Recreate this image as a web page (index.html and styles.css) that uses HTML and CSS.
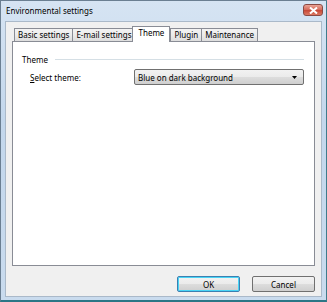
FILE: index.html
```html
<!DOCTYPE html>
<html>
<head>
<meta charset="utf-8">
<link rel="stylesheet" href="styles.css">
</head>
<body>
<div class="window">
  <div class="titlebar">
    <span class="title">Environmental settings</span>
    <span class="close"><svg width="9" height="7" viewBox="0 0 9 7"><path d="M1 0.5 L8 6.5 M8 0.5 L1 6.5" stroke="#fff" stroke-width="2"/></svg></span>
  </div>
  <div class="client">
    <div class="tabs">
      <div class="tab">Basic settings</div>
      <div class="tab">E-mail settings</div>
      <div class="tab selected">Theme</div>
      <div class="tab">Plugin</div>
      <div class="tab">Maintenance</div>
    </div>
    <div class="panel">
      <div class="group">
        <span class="group-label">Theme</span>
        <span class="group-line"></span>
      </div>
      <div class="row">
        <span class="label"><u>S</u>elect theme:</span>
        <div class="combo">
          <span>Blue on dark background</span>
          <svg width="5" height="3" viewBox="0 0 5 3"><path d="M0 0 H5 L2.5 3 Z" fill="#000"/></svg>
        </div>
      </div>
    </div>
    <div class="buttons">
      <div class="btn default">OK</div>
      <div class="btn">Cancel</div>
    </div>
  </div>
</div>
</body>
</html>
```

FILE: styles.css
```css
html, body {
  margin: 0;
  padding: 0;
  background: #fff;
}
body {
  font-family: "Noto Sans", "DejaVu Sans", sans-serif;
  font-size: 8px;
  color: #000;
}
.window {
  width: 327px;
  height: 302px;
  box-sizing: border-box;
  border: 1px solid #6b7f92;
  border-bottom: 2px solid #2b7686;
  border-right-color: #3f7c8c;
  background: linear-gradient(#d6e4f3, #c3d7ec 40%, #c9dbee);
  display: flex;
  flex-direction: column;
}
.titlebar {
  height: 20px;
  display: flex;
  align-items: center;
  justify-content: space-between;
  padding: 0 3px 0 5px;
}
.title {
  margin-top: -1px;
}
.close {
  width: 20px;
  height: 12px;
  margin-top: -2px;
  box-sizing: border-box;
  border: 1px solid #8a4a44;
  border-radius: 3px;
  background: linear-gradient(#eba395, #d66e5e 45%, #c74a39 55%, #dc7862);
  display: flex;
  align-items: center;
  justify-content: center;
}
.client {
  flex: 1;
  margin: 0 4px 3px 4px;
  background: #f0f0f0;
  border: 1px solid #aab9c9;
  display: flex;
  flex-direction: column;
  padding: 4px 6px 0 6px;
}
.tabs {
  display: flex;
  align-items: flex-end;
  height: 16px;
  padding-left: 2px;
  position: relative;
  z-index: 1;
  margin-bottom: -1px;
}
.tab {
  height: 13px;
  box-sizing: border-box;
  border: 1px solid #898c95;
  border-bottom: none;
  margin-right: -1px;
  padding: 0 3px;
  line-height: 12px;
  background: linear-gradient(#f3f3f3, #ebebeb 50%, #dddddd);
  margin-bottom: 1px;
}
.tab.selected {
  height: 16px;
  background: #fff;
  margin: 0 -1px 0 -2px;
  padding: 0 5px;
  line-height: 12px;
  position: relative;
  z-index: 2;
}
.tab.selected + .tab {
  margin-left: 1px;
}
.panel {
  height: 225px;
  box-sizing: border-box;
  border: 1px solid #898c95;
  background: #fff;
  padding: 11px 10px 0 9px;
}
.group {
  display: flex;
  align-items: center;
  height: 12px;
}
.group-label {
  margin-right: 7px;
}
.group-line {
  flex: 1;
  height: 0;
  border-top: 1px solid #d5dfe5;
}
.row {
  display: flex;
  align-items: center;
  margin-top: 4px;
  padding-left: 8px;
}
.label {
  width: 104px;
}
.label u {
  text-decoration-thickness: 1px;
}
.combo {
  flex: 1;
  height: 16px;
  box-sizing: border-box;
  border: 1px solid #707070;
  border-radius: 2px;
  background: linear-gradient(#f2f2f2, #ebebeb 50%, #dddddd 51%, #cfcfcf);
  display: flex;
  align-items: center;
  justify-content: space-between;
  padding: 0 6px 0 3px;
}
.buttons {
  display: flex;
  justify-content: flex-end;
  gap: 12px;
  margin-top: 10px;
}
.btn {
  width: 63px;
  height: 16px;
  box-sizing: border-box;
  border: 1px solid #707070;
  border-radius: 2px;
  background: linear-gradient(#f2f2f2, #ebebeb 50%, #dddddd 51%, #cfcfcf);
  display: flex;
  align-items: center;
  justify-content: center;
}
.btn.default {
  border-color: #3c7fb1;
  box-shadow: inset 0 0 0 1px #48d4f5;
}
```
